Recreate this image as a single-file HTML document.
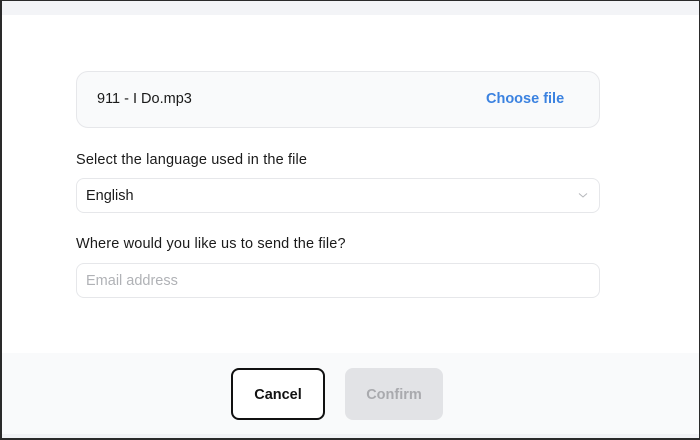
<!DOCTYPE html>
<html><head><style>
*{margin:0;padding:0;box-sizing:border-box}
body{width:700px;height:440px;position:relative;background:#fff;font-family:"Liberation Sans",sans-serif;overflow:hidden}
.frame{position:absolute;inset:0;border:2px solid #2a2a2a;border-top-width:1px;border-right-width:1px;pointer-events:none;z-index:5}
.top{position:absolute;left:0;top:0;width:700px;height:15px;background:#f3f4f7}
.foot{position:absolute;left:0;top:353px;width:700px;height:87px;background:#f9fafb}
.foot2{position:absolute;left:0;top:434px;width:700px;height:6px;background:#f1f2f5}
.box{position:absolute;left:76px;width:524px;border:1px solid #e6e7ea;border-radius:8px;background:#fff}
.file{top:71px;height:57px;background:#f9fafb;border-radius:12px}
.t{position:absolute;font-size:14.5px;color:#1a1a1a;white-space:nowrap}
.l{letter-spacing:0.15px}
.btn{position:absolute;top:368px;height:52px;border-radius:8px;font-weight:bold;font-size:14.5px;display:flex;align-items:center;justify-content:center;padding-top:1px}
</style></head><body>
<div class="top"></div>
<div class="foot"></div><div class="foot2"></div>
<div class="box file"></div>
<div class="t" style="left:97px;top:91px">911 - I Do.mp3</div>
<div class="t" style="left:486px;top:91px;color:#3b82e0;font-weight:bold">Choose file</div>
<div class="t l" style="left:76px;top:152px">Select the language used in the file</div>
<div class="box" style="top:178px;height:35px"></div>
<div class="t" style="left:86px;top:188px">English</div>
<svg style="position:absolute;left:578px;top:192px" width="10" height="7"><path d="M1 1.5L5 5L9 1.5" stroke="#b5b7bb" fill="none" stroke-width="1"/></svg>
<div class="t l" style="left:76px;top:236px">Where would you like us to send the file?</div>
<div class="box" style="top:263px;height:35px"></div>
<div class="t" style="left:86px;top:273px;color:#b0b2b6">Email address</div>
<div class="btn" style="left:231px;width:94px;border:2px solid #111;background:#fff;color:#111">Cancel</div>
<div class="btn" style="left:345px;width:98px;background:#e2e3e6;color:#a9aaae">Confirm</div>
<div class="frame"></div>
</body></html>
